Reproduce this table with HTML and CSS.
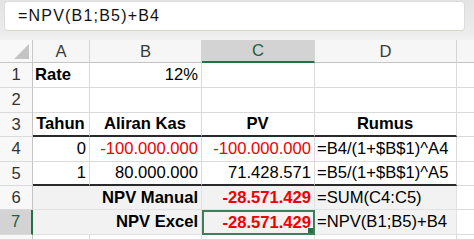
FILE: index.html
```html
<!DOCTYPE html>
<html>
<head>
<meta charset="utf-8">
<link rel="stylesheet" href="styles.css">
</head>
<body>
<div class="fbar">
  <div class="fbox">=NPV(B1;B5)+B4</div>
</div>
<div class="sheet">
  <div class="corner"><span class="tri"></span></div>
  <div class="ch">A</div>
  <div class="ch">B</div>
  <div class="ch sel">C</div>
  <div class="ch">D</div>
  <div class="ch last"></div>

  <div class="rh">1</div>
  <div class="c b">Rate</div>
  <div class="c r">12%</div>
  <div class="c"></div>
  <div class="c"></div>
  <div class="c last"></div>

  <div class="rh">2</div>
  <div class="c"></div>
  <div class="c"></div>
  <div class="c"></div>
  <div class="c"></div>
  <div class="c last"></div>

  <div class="rh">3</div>
  <div class="c b m thick">Tahun</div>
  <div class="c b m thick">Aliran Kas</div>
  <div class="c b m thick">PV</div>
  <div class="c b m thick">Rumus</div>
  <div class="c last"></div>

  <div class="rh">4</div>
  <div class="c r">0</div>
  <div class="c r red">-100.000.000</div>
  <div class="c r red">-100.000.000</div>
  <div class="c l">=B4/(1+$B$1)^A4</div>
  <div class="c last"></div>

  <div class="rh">5</div>
  <div class="c r thick">1</div>
  <div class="c r thick">80.000.000</div>
  <div class="c r thick">71.428.571</div>
  <div class="c l thick">=B5/(1+$B$1)^A5</div>
  <div class="c last"></div>

  <div class="rh">6</div>
  <div class="c r b g span2">NPV Manual</div>
  <div class="c r b g red">-28.571.429</div>
  <div class="c l g">=SUM(C4:C5)</div>
  <div class="c last"></div>

  <div class="rh selrow">7</div>
  <div class="c r b g span2">NPV Excel</div>
  <div class="c r b g red active">-28.571.429<span class="handle"></span></div>
  <div class="c l g">=NPV(B1;B5)+B4</div>
  <div class="c last"></div>

  <div class="rh"></div>
  <div class="c"></div>
  <div class="c"></div>
  <div class="c"></div>
  <div class="c"></div>
  <div class="c last"></div>
</div>
</body>
</html>
```
FILE: styles.css
```css
html, body {
  margin: 0;
  padding: 0;
  background: #ffffff;
  overflow: hidden;
}
body {
  width: 474px;
  height: 240px;
  font-family: "Liberation Sans", Arial, sans-serif;
  color: #000;
}
.fbar {
  height: 40px;
  box-sizing: border-box;
  padding: 1px 9px 9px 4px;
  background: linear-gradient(#e4e4e4, #ececec 85%, #f2f2f2);
}
.fbox {
  height: 30px;
  box-sizing: border-box;
  background: #fff;
  border: 1px solid #dcdcdc;
  border-bottom: 1px solid #d9d9c8;
  border-radius: 4px;
  padding-left: 13px;
  font-size: 16px;
  letter-spacing: 1.2px;
  line-height: 28px;
  color: #111;
}
.sheet {
  display: grid;
  grid-template-columns: 33px 57px 112px 113px 142px 17px;
  grid-template-rows: 23px 25px 25px 24px 25px 24px 24px 25px 5px;
  font-size: 16.6px;
}
.sheet > div {
  box-sizing: border-box;
  white-space: nowrap;
  overflow: hidden;
  display: flex;
  align-items: center;
}
.corner {
  background: #f8f8f8;
  border-right: 1px solid #c8c8c8;
  border-bottom: 1px solid #c8c8c8;
  position: relative;
}
.tri {
  position: absolute;
  right: 3px;
  bottom: 3px;
  width: 0;
  height: 0;
  border-left: 15px solid transparent;
  border-bottom: 15px solid #c4c4c4;
}
.ch {
  background: #f6f6f6;
  border-right: 1px solid #d4d4d4;
  border-bottom: 1px solid #c4c4c4;
  justify-content: center;
  color: #3a3a3a;
  padding-top: 1px;
}
.ch.sel {
  background: #d3d3d3;
  border-bottom: 2px solid #217346;
  color: #1f5f3c;
}
.ch.last {
  border-right: none;
}
.rh {
  background: #f8f8f8;
  border-right: 1px solid #c4c4c4;
  border-bottom: 1px solid #dadada;
  justify-content: center;
  color: #333;
}
.rh.selrow {
  background: #d3d3d3;
  border-right: 2px solid #217346;
  color: #1f5f3c;
}
.c {
  border-right: 1px solid #dadada;
  border-bottom: 1px solid #dadada;
  padding: 0 3px 0 2px;
}
.c.last {
  border-right: none;
}
.b { font-weight: bold; }
.r { justify-content: flex-end; }
.l { justify-content: flex-start; }
.m { justify-content: center; }
.red { color: #f00000; }
.g { background: #f2f2f2; border-bottom-color: #e2e2e2; border-right-color: #e2e2e2; }
.span2 { grid-column: span 2; }
.thick { border-bottom: 2px solid #2a2a2a; }
.active {
  position: relative;
  border: 2px solid #3f7d5b;
  padding-right: 2px;
}
.handle {
  position: absolute;
  right: -1px;
  bottom: -1px;
  width: 5px;
  height: 5px;
  background: #217346;
  border: 1px solid #fff;
}
```
